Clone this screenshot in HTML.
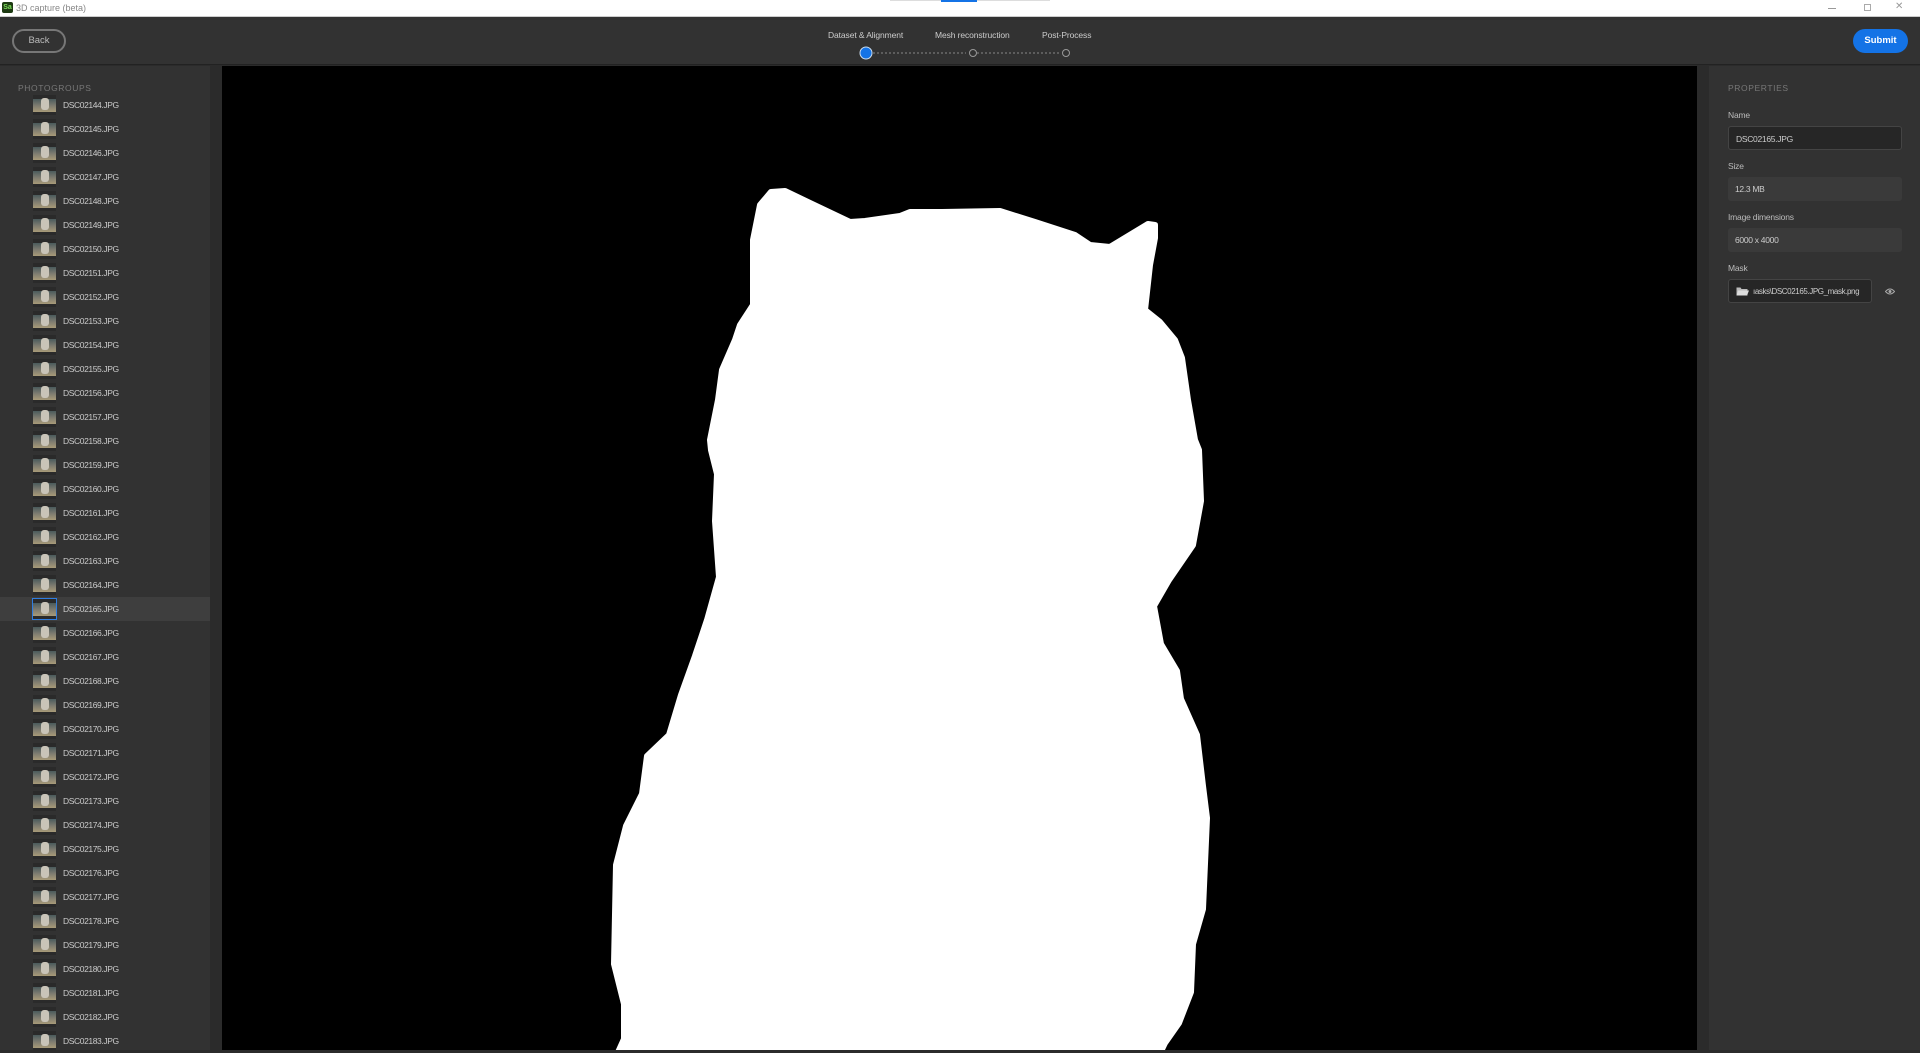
<!DOCTYPE html>
<html><head><meta charset="utf-8"><style>
*{margin:0;padding:0;box-sizing:border-box}
body{width:1920px;height:1050px;overflow:hidden;background:#2b2b2b;font-family:"Liberation Sans",sans-serif;position:relative;color:#ddd}
.title{position:absolute;left:0;top:0;width:1920px;height:17px;background:#fff;border-bottom:1px solid #ccc}
.title .logo{position:absolute;left:2px;top:2px;width:11px;height:11px;background:#1d3a12;border-radius:2px;color:#7de05a;font-size:7px;font-weight:bold;line-height:11px;text-align:center}
.title .t{position:absolute;left:16px;top:3px;font-size:9px;color:#888}
.title .tab{position:absolute;top:0;height:1px;background:#ddd}
.bar{position:absolute;left:0;top:17px;width:1920px;height:48px;background:#323232;border-bottom:1px solid #222}
.back{position:absolute;left:12px;top:12px;width:54px;height:24px;border:2px solid #777;border-radius:12px;font-size:9.5px;color:#bbb;text-align:center;line-height:20px}
.submit{position:absolute;left:1853px;top:12px;width:55px;height:24px;background:#1473e6;border-radius:12px;font-size:9.5px;font-weight:bold;color:#fff;text-align:center;line-height:24px}
.step{position:absolute;top:13px;font-size:8.5px;color:#ccc;letter-spacing:-.1px}
.left{position:absolute;left:0;top:66px;width:210px;height:984px;background:#323232}
.hd{position:absolute;font-size:8.5px;letter-spacing:.6px;color:#777}
.row{position:absolute;left:0;width:210px;height:24px}
.row.sel{background:#3e3e3e}
.th{position:absolute;left:33px;top:2px;width:23px;height:20px;background:#2a2a2a}
.th i{position:absolute;left:0;top:4px;width:23px;height:13px;background:linear-gradient(180deg,#4a5a5c 0%,#7d7b70 50%,#a89a78 100%)}
.th b{position:absolute;left:8px;top:3px;width:8px;height:12px;background:#c9c4b8;border-radius:3px}
.row.sel .th{outline:1px solid #2f7de0}
.row span{position:absolute;left:63px;top:7px;font-size:8.5px;color:#ccc;letter-spacing:-.4px}
.right{position:absolute;left:1709px;top:66px;width:211px;height:984px;background:#323232}
.lbl{position:absolute;left:19px;font-size:8.5px;color:#bbb;letter-spacing:-.2px}
.fld{position:absolute;left:19px;width:174px;height:24px;background:#3a3a3a;border-radius:3px;font-size:8.5px;color:#ccc;padding:7px 7px;letter-spacing:-.3px}
.fld.dark{background:#262626;border:1px solid #444}
</style></head><body>
<div class="title"><div class="logo">Sa</div><div class="t">3D capture (beta)</div>
<div class="tab" style="left:890px;width:160px"></div><div class="tab" style="left:941px;width:36px;height:2px;background:#1473e6"></div>
<div style="position:absolute;left:1828px;top:8px;width:8px;height:1px;background:#999"></div>
<div style="position:absolute;left:1864px;top:4px;width:7px;height:7px;border:1px solid #aaa"></div>
<div style="position:absolute;left:1895px;top:1px;font-size:10px;color:#999">✕</div></div>
<div class="bar"><div class="back">Back</div>
<div class="step" style="left:828px">Dataset &amp; Alignment</div>
<div class="step" style="left:935px">Mesh reconstruction</div>
<div class="step" style="left:1042px">Post-Process</div>
<svg style="position:absolute;left:850px;top:27px" width="230" height="20"><line x1="23" y1="9" x2="116" y2="9" stroke="#888" stroke-dasharray="2,2"/><line x1="127" y1="9" x2="210" y2="9" stroke="#888" stroke-dasharray="2,2"/><circle cx="16" cy="9" r="6" fill="#1473e6" stroke="#cde" stroke-width="1"/><circle cx="123" cy="9" r="3.5" fill="none" stroke="#999"/><circle cx="216" cy="9" r="3.5" fill="none" stroke="#999"/></svg>
<div class="submit">Submit</div></div>
<div class="left"><div class="hd" style="left:18px;top:17px">PHOTOGROUPS</div>
<div id="rows"></div></div>
<div style="position:absolute;left:222px;top:66px;width:1475px;height:984px;background:#000;overflow:hidden">
<svg width="1475" height="984" viewBox="222 66 1475 984"><path fill="#fff" stroke="#fff" stroke-width="6" stroke-linejoin="round" d="M771 192 L785 191 L810 203 L850 222 L865 221 L900 216 L910 212 L942 212 L1000 211 L1035 222 L1075 235 L1090 245 L1110 247 L1148 224 L1155 225 L1155 238 L1150 265 L1145 310 L1160 322 L1175 340 L1182 358 L1188 400 L1195 440 L1199 450 L1201 501 L1193 545 L1169 580 L1154 606 L1161 644 L1177 671 L1181 699 L1197 735 L1203 786 L1207 818 L1203 909 L1193 944 L1191 992 L1179 1023 L1165 1043 L1152 1070 L610 1070 L624 1039 L624 1004 L614 964 L616 865 L626 826 L642 794 L647 756 L669 735 L681 695 L695 656 L707 620 L719 577 L715 521 L717 474 L711 450 L710 440 L718 400 L722 370 L735 340 L740 325 L753 305 L753 240 L760 205 Z"/></svg></div>
<div class="right"><div class="hd" style="left:19px;top:17px">PROPERTIES</div>
<div class="lbl" style="top:44px">Name</div><div class="fld dark" style="top:60px">DSC02165.JPG</div>
<div class="lbl" style="top:95px">Size</div><div class="fld" style="top:111px">12.3 MB</div>
<div class="lbl" style="top:146px">Image dimensions</div><div class="fld" style="top:162px">6000 x 4000</div>
<div class="lbl" style="top:197px">Mask</div><div class="fld dark" style="top:213px;width:144px;padding-left:24px;white-space:nowrap;overflow:hidden;font-size:8px;letter-spacing:-.4px">ıasks\DSC02165.JPG_mask.png</div>
<svg style="position:absolute;left:27px;top:220px" width="13" height="10"><path d="M0.5 1.5h4l1 1.5h6v6.5h-11z" fill="#bbb"/><path d="M2 4.5h11l-2 5h-10.5z" fill="#ddd"/></svg>
<svg style="position:absolute;left:176px;top:222px" width="10" height="7"><path d="M0.5 3.5Q5 -1.5 9.5 3.5Q5 8.5 0.5 3.5Z" fill="none" stroke="#aaa"/><circle cx="5" cy="3.5" r="1.5" fill="#aaa"/></svg></div>
<script>
var h='';for(var i=0;i<40;i++){var y=27+i*24;h+='<div class="row'+(i==21?' sel':'')+'" style="top:'+y+'px"><div class="th"><i></i><b></b></div><span>DSC0'+(2144+i)+'.JPG</span></div>';}
document.getElementById('rows').innerHTML=h;
</script>
</body></html>
